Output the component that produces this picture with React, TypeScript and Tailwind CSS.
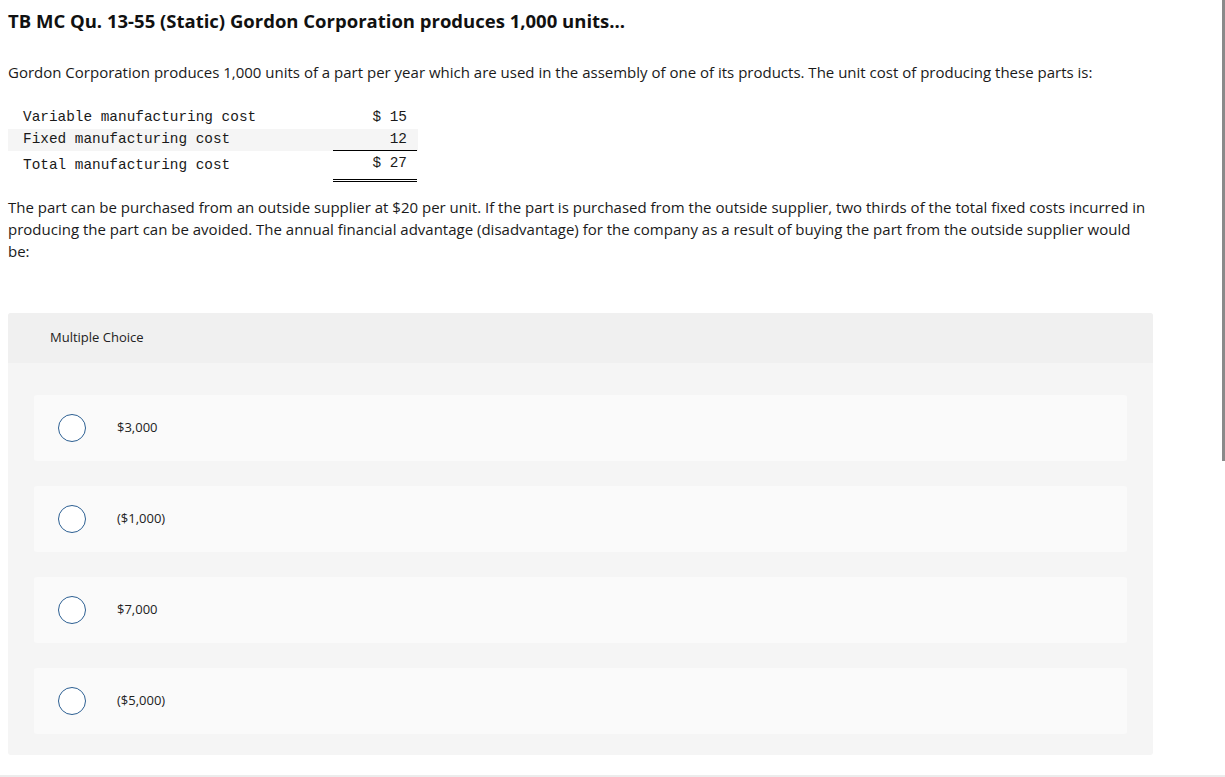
import React from 'react';

const costs = [
  { label: 'Variable manufacturing cost', value: '$ 15', shaded: false, rule: '' },
  { label: 'Fixed manufacturing cost', value: '12', shaded: true, rule: 'single' },
  { label: 'Total manufacturing cost', value: '$ 27', shaded: false, rule: 'double' },
];

const choices = ['$3,000', '($1,000)', '$7,000', '($5,000)'];

function Choice({ text }: { text: string }) {
  return (
    <div className="h-[66px] bg-[#fafafa] rounded-[3px] flex items-center">
      <span className="ml-[24px] w-[28px] h-[28px] rounded-full border-[1.5px] border-[#2c5f92] bg-white shrink-0"></span>
      <span className="ml-[31px] text-[13px] text-[#222]">{text}</span>
    </div>
  );
}

export default function App() {
  return (
    <div className="relative w-[1225px] h-[777px] bg-white overflow-hidden text-[#1a1a1a]" style={{ fontFamily: '"Open Sans", "Noto Sans", sans-serif' }}>
      {/* scrollbar thumb */}
      <div className="absolute right-0 top-0 w-[3px] h-[461px] bg-[#8a8a8a]"></div>

      <div className="pl-2 pr-[72px]">
        <h1 className="pt-[9px] text-[18.5px] font-bold leading-[24px] text-[#111]">
          TB MC Qu. 13-55 (Static) Gordon Corporation produces 1,000 units...
        </h1>

        <p className="mt-[28px] text-[15px] leading-[22px]">
          Gordon Corporation produces 1,000 units of a part per year which are used in the assembly of one of its products. The unit cost of producing these parts is:
        </p>

        <div className="mt-[24px] w-[410px]" style={{ fontFamily: '"Liberation Mono", "DejaVu Sans Mono", monospace' }}>
          {costs.map((c) => (
            <div key={c.label} className={`flex items-start text-[14.4px] ${c.shaded ? 'bg-[#f5f5f5]' : ''}`}>
              <div className={`flex-1 pl-[15px] flex items-center ${c.rule === 'double' ? 'h-[29px]' : 'h-[22px]'}`}>{c.label}</div>
              <div className={`w-[84px] mr-[1px] flex items-center justify-end pr-[10px] ${c.rule === 'single' ? 'border-b border-black h-[22px]' : c.rule === 'double' ? 'border-b-[3px] border-double border-black h-[31px] pb-[2px]' : 'h-[22px]'}`}>
                {c.value}
              </div>
            </div>
          ))}
        </div>

        <p className="mt-[14px] w-[1142px] text-[15px] leading-[22px]">
          The part can be purchased from an outside supplier at $20 per unit. If the part is purchased from the outside supplier, two thirds of the total fixed costs incurred in producing the part can be avoided. The annual financial advantage (disadvantage) for the company as a result of buying the part from the outside supplier would be:
        </p>

        <div className="mt-[51px] rounded-[3px] bg-[#f5f5f5]">
          <div className="h-[50px] bg-[#f0f0f0] rounded-t-[3px] flex items-center pl-[42px] text-[13px] text-[#222]">
            Multiple Choice
          </div>
          <div className="pt-[32px] pb-[21px] px-[26px] flex flex-col gap-[25px]">
            {choices.map((t) => (
              <Choice key={t} text={t} />
            ))}
          </div>
        </div>
      </div>

      <div className="absolute left-0 right-0 bottom-0 h-[2px] bg-[#ececec]"></div>
    </div>
  );
}
